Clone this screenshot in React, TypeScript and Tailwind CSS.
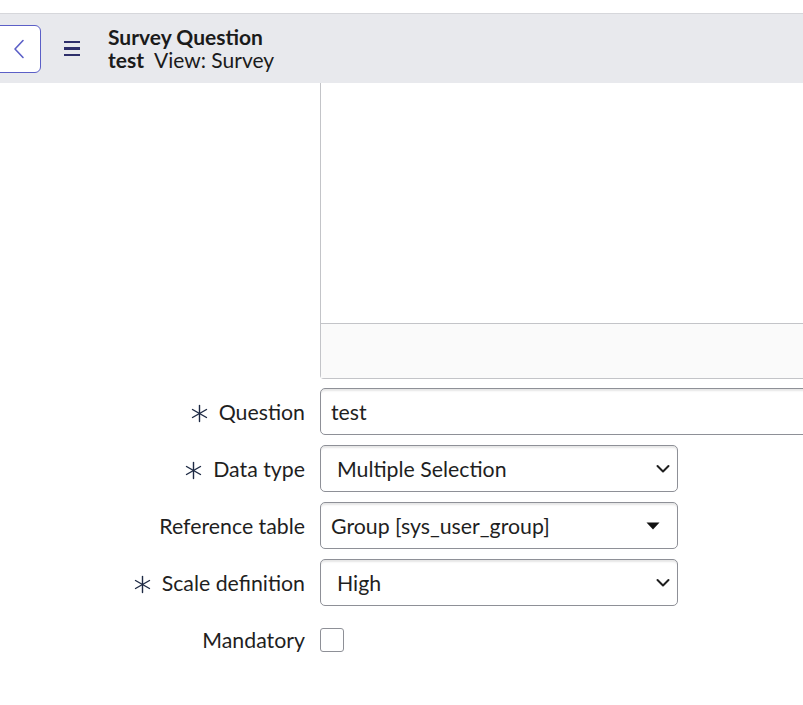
import React from "react";

const Chevron = () => (
  <svg width="14" height="9" viewBox="0 0 14 9" className="absolute right-[7px] top-1/2 -translate-y-1/2">
    <path d="M1.5 1.5 L7 7 L12.5 1.5" fill="none" stroke="#1f1f1f" strokeWidth="2" strokeLinecap="round" strokeLinejoin="round" />
  </svg>
);

const Star = () => (
  <svg width="19" height="19" viewBox="0 0 19 19" className="mr-[10px]">
    <g stroke="#1e2a44" strokeWidth="1.4" strokeLinecap="round">
      <line x1="9.5" y1="1.5" x2="9.5" y2="17.5" />
      <line x1="2.5" y1="5.5" x2="16.5" y2="13.5" />
      <line x1="2.5" y1="13.5" x2="16.5" y2="5.5" />
    </g>
  </svg>
);

function Label({ text, req }: { text: string; req?: boolean }) {
  return (
    <div className="w-[305px] shrink-0 flex items-center justify-end text-[21.3px] text-[#1f1f1f] pt-[3px]">
      {req && <Star />}
      <span>{text}</span>
    </div>
  );
}

const fieldBox =
  "relative h-[47px] rounded-[5px] border border-[#8e9097] bg-white shadow-[inset_0_3px_2px_-1px_#e6e6e6] flex items-center text-[21.3px] text-[#1f1f1f] pt-[2px]";

export default function App() {
  return (
    <div className="w-[803px] h-[705px] overflow-hidden bg-white" style={{ fontFamily: "Lato, 'Noto Sans', sans-serif" }}>
      <div className="h-[13px] bg-white" />
      <div className="h-[70px] bg-[#e8e9ed] border-t border-[#d6d7db] flex items-center">
        <div className="ml-[-6px] w-[47px] h-[48px] rounded-[6px] border border-[#5b5fc7] bg-white flex items-center justify-center">
          <svg width="12" height="20" viewBox="0 0 12 20" className="ml-[3px]">
            <path d="M10 1.5 L2 10 L10 18.5" fill="none" stroke="#5b5fc7" strokeWidth="1.6" strokeLinecap="round" strokeLinejoin="round" />
          </svg>
        </div>
        <div className="ml-[23px] flex flex-col gap-[4px]">
          <div className="w-[16px] h-[2.5px] bg-[#2e2f6b]" />
          <div className="w-[16px] h-[2.5px] bg-[#2e2f6b]" />
          <div className="w-[16px] h-[2.5px] bg-[#2e2f6b]" />
        </div>
        <div className="ml-[28px] flex flex-col leading-[23px] text-[#1b1b1b] mt-[-1px]">
          <div className="text-[21px] font-bold">Survey Question</div>
          <div className="text-[21px]">
            <span className="font-bold">test</span>
            <span className="ml-[10px]">View: Survey</span>
          </div>
        </div>
      </div>

      <div className="flex">
        <div className="w-[320px] shrink-0" />
        <div className="flex-1 h-[296px] border-l border-b border-[#c3c4c8] rounded-bl-[4px] flex flex-col">
          <div className="h-[240px] bg-white" />
          <div className="flex-1 bg-[#fafafa] border-t border-[#c3c4c8]" />
        </div>
      </div>

      <div className="flex flex-col gap-[10px] mt-[9px]">
        <div className="flex gap-[15px]">
          <Label text="Question" req />
          <div className={fieldBox + " w-[520px] shrink-0 pl-[10px]"}>test</div>
        </div>
        <div className="flex gap-[15px]">
          <Label text="Data type" req />
          <div className={fieldBox + " w-[358px] pl-[16px]"}>
            Multiple Selection
            <Chevron />
          </div>
        </div>
        <div className="flex gap-[15px]">
          <Label text="Reference table" />
          <div className={fieldBox + " w-[358px] pl-[10px]"}>
            Group [sys_user_group]
            <svg width="14" height="8" viewBox="0 0 14 8" className="absolute right-[17px] top-1/2 -translate-y-1/2">
              <path d="M0.5 0.5 L13.5 0.5 L7 7.5 Z" fill="#111" />
            </svg>
          </div>
        </div>
        <div className="flex gap-[15px]">
          <Label text="Scale definition" req />
          <div className={fieldBox + " w-[358px] pl-[16px]"}>
            High
            <Chevron />
          </div>
        </div>
        <div className="flex gap-[15px] h-[47px] items-center">
          <Label text="Mandatory" />
          <div className="w-[24px] h-[24px] rounded-[3px] border border-[#8e9097] bg-white" />
        </div>
      </div>
    </div>
  );
}
